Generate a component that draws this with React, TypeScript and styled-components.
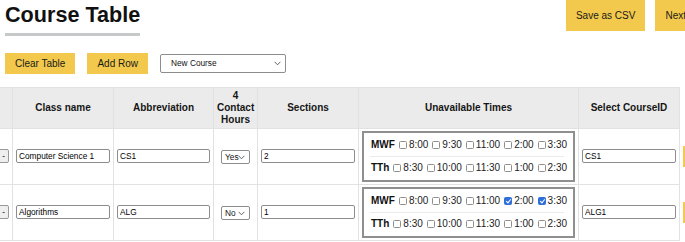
import { FC, ReactNode } from 'react';
import styled, { createGlobalStyle } from 'styled-components';
import { Trash2 } from 'lucide-react';

const GlobalStyle = createGlobalStyle`
  body {
    margin: 0;
    overflow: hidden;
    background: #fff;
    font-family: 'Liberation Sans', Arial, sans-serif;
    color: #111;
  }
`;

const Page = styled.div`
  width: 701px;
  padding: 0 5px;
  box-sizing: border-box;
`;

const TopBar = styled.div`
  display: flex;
  align-items: flex-start;
`;

const TitleBlock = styled.div`
  display: flex;
  flex-direction: column;
  align-items: flex-start;
`;

const Title = styled.h1`
  display: inline-block;
  margin: 0;
  padding: 3px 0 5px;
  font-size: 21.6px;
  font-weight: bold;
  line-height: 1.15;
  border-bottom: 3px solid #c6c9c9;
`;

const Toolbar = styled.div`
  display: flex;
  align-items: center;
  gap: 12px;
  margin-top: 17px;
`;

const Actions = styled.div`
  display: flex;
  gap: 10px;
  margin-left: auto;
`;

const YellowButton = styled.button<{ $tall?: boolean }>`
  display: flex;
  align-items: center;
  font-family: inherit;
  font-size: 10px;
  line-height: 11px;
  color: #1a1a1a;
  background: #f2c94c;
  border: none;
  border-radius: 0;
  padding: ${({ $tall }) => ($tall ? '10px 10px' : '5px 10px')};
  white-space: nowrap;
  cursor: pointer;
`;

const SelectWrap = styled.span`
  position: relative;
  display: inline-block;
  vertical-align: middle;
`;

const Chevron = styled.svg`
  position: absolute;
  top: 50%;
  right: 5px;
  width: 7px;
  height: 5px;
  margin-top: -2px;
  pointer-events: none;
`;

const BaseSelect = styled.select<{ $width: number; $height: number; $pad: number }>`
  appearance: none;
  display: block;
  width: ${({ $width }) => $width}px;
  height: ${({ $height }) => $height}px;
  font-family: inherit;
  font-size: 8.3px;
  padding: 0 0 0 ${({ $pad }) => $pad}px;
  border: 1px solid #8d8d8d;
  border-radius: 2px;
  background: #fff;
  color: #111;
`;

interface ISelect {
  width: number;
  height: number;
  pad: number;
  value: string;
  children: ReactNode;
}

const Select: FC<ISelect> = ({ width, height, pad, value, children }) => (
  <SelectWrap>
    <BaseSelect $width={width} $height={height} $pad={pad} defaultValue={value}>
      {children}
    </BaseSelect>
    <Chevron viewBox="0 0 7 5">
      <path d="M0.6 0.8 L3.5 3.8 L6.4 0.8" fill="none" stroke="#555" strokeWidth="0.9" />
    </Chevron>
  </SelectWrap>
);

const Table = styled.table`
  width: 745px;
  margin: 13px 0 0 -11px;
  border-collapse: collapse;
  table-layout: fixed;
`;

const HeadCell = styled.th<{ $blank?: boolean }>`
  background: ${({ $blank }) => ($blank ? '#fff' : '#ebebeb')};
  border: ${({ $blank }) => ($blank ? 'none' : '1px solid #e2e2e2')};
  font-size: 10px;
  font-weight: bold;
  line-height: 1.2;
  padding: 2px 3px;
  height: 36px;
  text-align: center;
  color: #161616;
`;

const Cell = styled.td<{ $blank?: boolean; $align?: string }>`
  border: ${({ $blank }) => ($blank ? 'none' : '1px solid #e2e2e2')};
  padding: 2px 3px;
  vertical-align: middle;
  text-align: ${({ $align }) => $align || 'left'};
`;

const TextInput = styled.input`
  display: block;
  width: 100%;
  height: 14px;
  box-sizing: border-box;
  font-family: inherit;
  font-size: 8.3px;
  padding: 0 2px;
  border: 1px solid #8d8d8d;
  border-radius: 2px;
  color: #000;
  background: #fff;
`;

const MinusButton = styled.button`
  display: block;
  margin-left: auto;
  height: 14px;
  font-family: inherit;
  font-size: 8.3px;
  padding: 0 3px;
  border: 1px solid #9a9a9a;
  border-radius: 2px;
  background: #efefef;
  color: #111;
`;

const TimesBox = styled.div`
  border: 2px solid #8f8f8f;
  padding: 1px 9px 1px 6px;
`;

const TimesRow = styled.div<{ $divided?: boolean }>`
  display: flex;
  align-items: center;
  height: 22px;
  padding-left: 1px;
  border-top: ${({ $divided }) => ($divided ? '1px solid #ebebeb' : 'none')};
`;

const DayLabel = styled.span`
  font-size: 10px;
  font-weight: bold;
`;

const TimeOption = styled.label`
  display: flex;
  align-items: center;
  font-size: 10px;
  color: #222;
`;

const Check = styled.input`
  appearance: none;
  position: relative;
  box-sizing: border-box;
  width: 8px;
  height: 8px;
  margin: 0 2px 0 4px;
  border: 1px solid #8e8e8e;
  border-radius: 1.5px;
  background: #fff;

  &:checked {
    background: #2f6fdc;
    border-color: #2f6fdc;
  }

  &:checked::after {
    content: '';
    position: absolute;
    left: 2px;
    top: 0px;
    width: 2px;
    height: 4px;
    border: solid #fff;
    border-width: 0 1px 1px 0;
    transform: rotate(40deg);
  }
`;

const MWF = ['8:00', '9:30', '11:00', '2:00', '3:30'];
const TTH = ['8:30', '10:00', '11:30', '1:00', '2:30'];

interface ICourse {
  name: string;
  abbr: string;
  four: string;
  sections: string;
  checked: string[];
  courseId: string;
}

const courses: ICourse[] = [
  { name: 'Computer Science 1', abbr: 'CS1', four: 'Yes', sections: '2', checked: [], courseId: 'CS1' },
  { name: 'Algorithms', abbr: 'ALG', four: 'No', sections: '1', checked: ['MWF 2:00', 'MWF 3:30'], courseId: 'ALG1' },
];

const Times: FC<{ checked: string[] }> = ({ checked }) => (
  <TimesBox>
    <TimesRow>
      <DayLabel>MWF</DayLabel>
      {MWF.map(t => (
        <TimeOption key={t}>
          <Check type="checkbox" defaultChecked={checked.includes(`MWF ${t}`)} />
          {t}
        </TimeOption>
      ))}
    </TimesRow>
    <TimesRow $divided>
      <DayLabel>TTh</DayLabel>
      {TTH.map(t => (
        <TimeOption key={t}>
          <Check type="checkbox" defaultChecked={checked.includes(`TTh ${t}`)} />
          {t}
        </TimeOption>
      ))}
    </TimesRow>
  </TimesBox>
);

const App: FC = () => {
  return (
    <Page>
      <GlobalStyle />
      <TopBar>
        <TitleBlock>
          <Title>Course Table</Title>
          <Toolbar>
            <YellowButton>Clear Table</YellowButton>
            <YellowButton>Add Row</YellowButton>
            <Select width={126} height={19} pad={10} value="new">
              <option value="new">New Course</option>
            </Select>
          </Toolbar>
        </TitleBlock>
        <Actions>
          <YellowButton $tall>Save as CSV</YellowButton>
          <YellowButton $tall>Next</YellowButton>
        </Actions>
      </TopBar>

      <Table>
        <colgroup>
          <col style={{ width: 18 }} />
          <col style={{ width: 101 }} />
          <col style={{ width: 100 }} />
          <col style={{ width: 44 }} />
          <col style={{ width: 101 }} />
          <col style={{ width: 220 }} />
          <col style={{ width: 101 }} />
          <col style={{ width: 60 }} />
        </colgroup>
        <thead>
          <tr>
            <HeadCell />
            <HeadCell>Class name</HeadCell>
            <HeadCell>Abbreviation</HeadCell>
            <HeadCell>4 Contact Hours</HeadCell>
            <HeadCell>Sections</HeadCell>
            <HeadCell>Unavailable Times</HeadCell>
            <HeadCell>Select CourseID</HeadCell>
            <HeadCell $blank />
          </tr>
        </thead>
        <tbody>
          {courses.map(c => (
            <tr key={c.courseId}>
              <Cell><MinusButton>-</MinusButton></Cell>
              <Cell><TextInput defaultValue={c.name} /></Cell>
              <Cell><TextInput defaultValue={c.abbr} /></Cell>
              <Cell $align="center">
                <Select width={29} height={14} pad={3} value={c.four}>
                  <option>Yes</option>
                  <option>No</option>
                </Select>
              </Cell>
              <Cell><TextInput defaultValue={c.sections} /></Cell>
              <Cell><Times checked={c.checked} /></Cell>
              <Cell><TextInput defaultValue={c.courseId} /></Cell>
              <Cell $blank>
                <YellowButton aria-label="Remove row">
                  <Trash2 size={11} strokeWidth={2} />
                </YellowButton>
              </Cell>
            </tr>
          ))}
        </tbody>
      </Table>
    </Page>
  );
};

export default App;
